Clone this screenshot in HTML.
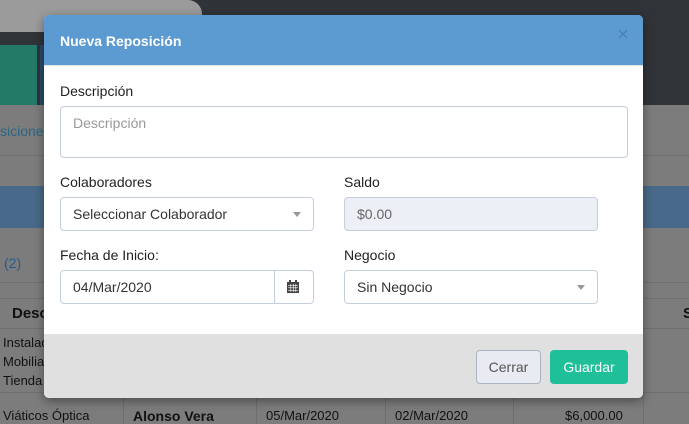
<!DOCTYPE html>
<html><head><meta charset="utf-8"><style>
*{box-sizing:border-box}
body{margin:0;width:689px;height:424px;overflow:hidden;background:#7c7c7c;font-family:"Liberation Sans",sans-serif;position:relative;font-size:14px;color:#333}
.a{position:absolute}
.lbl{position:absolute;font-size:14px;color:#222}
.inp{position:absolute;border:1px solid #c5cfdb;border-radius:4px;background:#fff;font-size:14px;padding-left:12px;display:flex;align-items:center}
.caret{position:absolute;right:12px;top:14px;width:0;height:0;border-left:4px solid transparent;border-right:4px solid transparent;border-top:5px solid #999}
</style></head><body>
<div class="a" style="left:0;top:0;width:689px;height:105px;background:#303338"></div>
<div class="a" style="left:0;top:0;width:202px;height:32px;background:#9b9b9b;border-top-right-radius:14px"></div>
<div class="a" style="left:0;top:45px;width:37px;height:60px;background:#237a66"></div>
<div class="a" style="left:40px;top:45px;width:6px;height:60px;background:#2a4a6a"></div>
<div class="a" style="left:0;top:123px;color:#2a6585;font-size:14px">siciones</div>
<div class="a" style="left:0;top:155px;width:689px;height:1px;background:#6f6f6f"></div>
<div class="a" style="left:0;top:186px;width:689px;height:42px;background:#48698a"></div>
<div class="a" style="left:4px;top:255px;color:#2a5a8a;font-size:14px">(2)</div>
<div class="a" style="left:0;top:282px;width:689px;height:1px;background:#6f6f6f"></div>
<div class="a" style="left:0;top:298px;width:689px;height:1px;background:#6f6f6f"></div>
<div class="a" style="left:12px;top:305px;font-weight:bold;font-size:15px;color:#111">Desc</div>
<div class="a" style="left:683px;top:305px;font-weight:bold;font-size:15px;color:#111">S</div>
<div class="a" style="left:0;top:328px;width:689px;height:1px;background:#6f6f6f"></div>
<div class="a" style="left:3px;top:333px;font-size:13px;line-height:19px;color:#111">Instalac<br>Mobilia<br>Tienda</div>
<div class="a" style="left:0;top:392px;width:689px;height:1px;background:#6f6f6f"></div>
<div class="a" style="left:3px;top:408px;font-size:13px;color:#111">Viáticos Óptica</div>
<div class="a" style="left:123px;top:392px;width:1px;height:32px;background:#6f6f6f"></div>
<div class="a" style="left:133px;top:408px;font-size:14px;font-weight:bold;color:#111">Alonso Vera</div>
<div class="a" style="left:256px;top:392px;width:1px;height:32px;background:#6f6f6f"></div>
<div class="a" style="left:266px;top:408px;font-size:13px;color:#111">05/Mar/2020</div>
<div class="a" style="left:385px;top:392px;width:1px;height:32px;background:#6f6f6f"></div>
<div class="a" style="left:395px;top:408px;font-size:13px;color:#111">02/Mar/2020</div>
<div class="a" style="left:513px;top:392px;width:1px;height:32px;background:#6f6f6f"></div>
<div class="a" style="left:565px;top:408px;font-size:13px;color:#111">$6,000.00</div>
<div class="a" style="left:643px;top:392px;width:1px;height:32px;background:#6f6f6f"></div>

<div class="a" style="left:44px;top:15px;width:599px;height:383px;background:#fff;border-radius:5px;overflow:hidden;box-shadow:0 3px 10px rgba(0,0,0,.4)">
 <div class="a" style="left:0;top:0;width:599px;height:51px;background:#5b9bd1;border-bottom:1px solid #e5e5e5"></div>
 <div class="a" style="left:16px;top:18px;color:#fff;font-weight:bold;font-size:14px">Nueva Reposición</div>
 <svg class="a" style="left:574px;top:14px" width="10" height="10" viewBox="0 0 10 10"><path d="M1 1L9 9M9 1L1 9" stroke="#4a7fb0" stroke-width="1.3"/></svg>
 <div class="a" style="left:0;top:319px;width:599px;height:64px;background:#e0e0e0"></div>
 <div class="a" style="left:432px;top:335px;width:65px;height:34px;border:1px solid #a9b4c0;border-radius:4px;background:#e8ebf1;color:#555;display:flex;align-items:center;justify-content:center">Cerrar</div>
 <div class="a" style="left:506px;top:335px;width:78px;height:34px;border-radius:4px;background:#1fbf99;color:#fff;display:flex;align-items:center;justify-content:center">Guardar</div>
</div>
<div class="lbl" style="left:60px;top:83px">Descripción</div>
<div class="inp" style="left:60px;top:106px;width:568px;height:52px;align-items:flex-start;padding-top:8px;color:#999">Descripción</div>
<div class="lbl" style="left:60px;top:174px">Colaboradores</div>
<div class="inp" style="left:60px;top:197px;width:254px;height:34px">Seleccionar Colaborador<div class="caret"></div></div>
<div class="lbl" style="left:344px;top:174px">Saldo</div>
<div class="inp" style="left:344px;top:197px;width:254px;height:34px;background:#eceff5;color:#666">$0.00</div>
<div class="lbl" style="left:60px;top:247px">Fecha de Inicio:</div>
<div class="inp" style="left:60px;top:270px;width:254px;height:34px">04/Mar/2020</div>
<div class="a" style="left:274px;top:271px;width:1px;height:32px;background:#c5cfdb"></div>
<svg class="a" style="left:287px;top:280px" width="12" height="13" viewBox="0 0 12 13"><rect x="0" y="2" width="12" height="11" fill="#444"/><rect x="2" y="0" width="2" height="3" fill="#444"/><rect x="8" y="0" width="2" height="3" fill="#444"/><g fill="#fff"><rect x="1" y="5" width="10" height="0.6"/><rect x="1" y="7.5" width="10" height="0.6"/><rect x="1" y="10" width="10" height="0.6"/><rect x="3.5" y="4" width="0.6" height="8"/><rect x="6" y="4" width="0.6" height="8"/><rect x="8.5" y="4" width="0.6" height="8"/></g></svg>
<div class="lbl" style="left:344px;top:247px">Negocio</div>
<div class="inp" style="left:344px;top:270px;width:254px;height:34px">Sin Negocio<div class="caret"></div></div>
</body></html>
